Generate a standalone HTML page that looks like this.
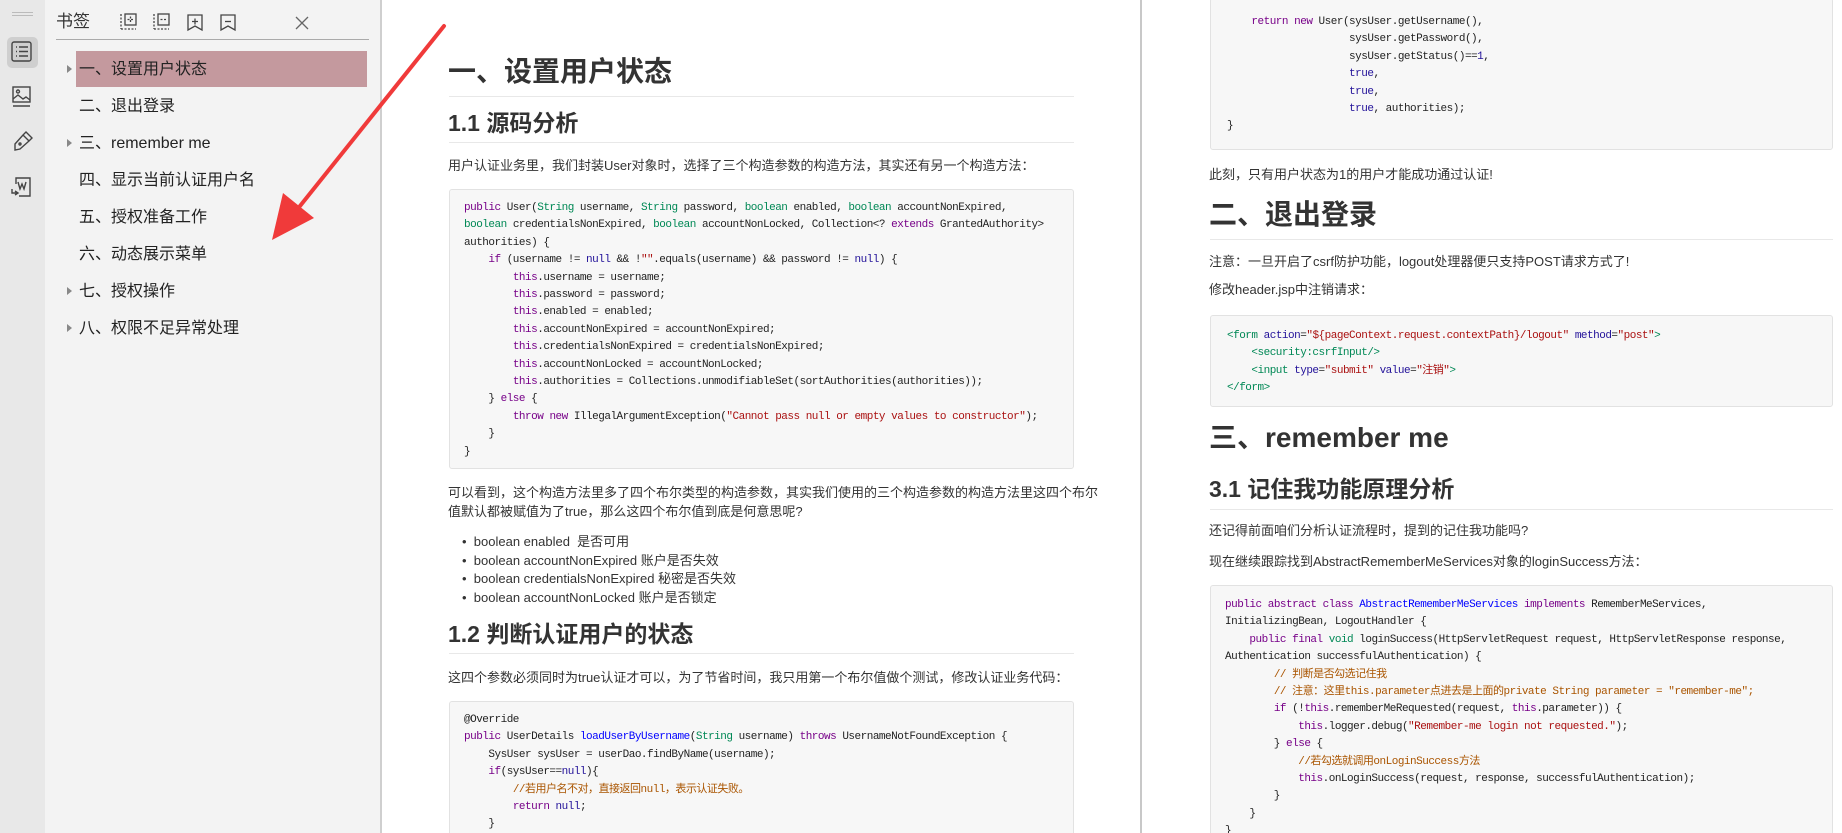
<!DOCTYPE html>
<html><head><meta charset="utf-8"><style>
*{margin:0;padding:0;box-sizing:border-box}
html,body{width:1842px;height:833px;overflow:hidden}
body{background:#e6e6e6;font-family:"Liberation Sans","Noto Sans CJK SC",sans-serif;position:relative;color:#333}
.abs{position:absolute}
#bar{left:0;top:0;width:45px;height:833px;background:#e8e8e8}
#panel{left:45px;top:0;width:335px;height:833px;background:#f3f3f3}
#vline{left:380px;top:0;width:2px;height:833px;background:#cfcfcf}
.page{top:0;height:833px;background:#fff}
.item{position:absolute;left:79px;font-size:16px;line-height:20px;color:#222;white-space:nowrap}
.tri{position:absolute;left:67px;width:0;height:0;border-left:5px solid #888;border-top:4px solid transparent;border-bottom:4px solid transparent}
.t{position:absolute;white-space:nowrap;font-size:13px;line-height:20px;color:#333}
.h1{position:absolute;font-size:28px;font-weight:bold;line-height:34px;color:#333;white-space:nowrap}
.h2{position:absolute;font-size:23px;font-weight:bold;line-height:28px;color:#333;white-space:nowrap}
.hr{position:absolute;height:1px;background:#e8e8e8}
.code{position:absolute;background:#f7f7f7;border:1px solid #e2e2e2;border-radius:3px;font-family:"Liberation Mono","Noto Sans CJK SC",monospace;font-size:11px;letter-spacing:-0.5px;line-height:17.4px;color:#222;white-space:pre;overflow:hidden}
.k{color:#770088}.ty{color:#008855}.s{color:#aa1111}.c{color:#aa5500}.b{color:#221199}.d{color:#0000ff}
#wrap{position:absolute;left:0;top:0;width:1842px;height:833px;overflow:hidden}
</style></head><body><div id="wrap">
<div id="bar" class="abs">
 <div class="abs" style="left:12px;top:12px;width:21px;height:1px;background:#bbb"></div>
 <div class="abs" style="left:12px;top:15px;width:21px;height:1px;background:#bbb"></div>
 <div class="abs" style="left:7px;top:37px;width:31px;height:31px;border-radius:5px;background:#cfcfcf"></div>
 <svg class="abs" style="left:11px;top:41px" width="23" height="22" viewBox="0 0 23 22" fill="none" stroke="#444" stroke-width="1.4"><rect x="1" y="1" width="19" height="19" rx="2"/><path d="M5 6h1M8 6h9M5 10.5h1M8 10.5h9M5 15h1M8 15h9"/></svg>
 <svg class="abs" style="left:11px;top:86px" width="22" height="22" viewBox="0 0 22 22" fill="none" stroke="#444" stroke-width="1.4"><rect x="2" y="1" width="17" height="15"/><circle cx="7" cy="5.5" r="1.5"/><path d="M2 13l5-4 5 4 3-2 4 3M2 20h17"/></svg>
 <svg class="abs" style="left:11px;top:131px" width="22" height="22" viewBox="0 0 22 22" fill="none" stroke="#444" stroke-width="1.4"><path d="M4 13l8-9 6 6-9 8-5 1z M12 4l3-3 6 6-3 3"/><circle cx="9" cy="13" r="1"/></svg>
 <svg class="abs" style="left:10px;top:176px" width="24" height="22" viewBox="0 0 24 22" fill="none" stroke="#444" stroke-width="1.4"><path d="M6 8V2h14v18H9M8 6l2 7 2-5 2 5 2-7M2 13v4h6M5 15l3 2-3 2"/></svg>
</div>
<div id="panel" class="abs">
 <div class="abs" style="left:11px;top:12px;font-size:17px;line-height:20px;color:#333">书签</div>
 <svg class="abs" style="left:75px;top:13px" width="150" height="20" viewBox="0 0 150 20" fill="none" stroke="#444" stroke-width="1.3">
  <rect x="5" y="1" width="11" height="11"/><path d="M10.5 3.5v6M7.5 6.5h6M1 1v15M1 16h15" stroke-dasharray="2 1.5"/>
  <rect x="38" y="1" width="11" height="11"/><path d="M40.5 6.5h6M34 1v15M34 16h15" stroke-dasharray="2 1.5"/>
  <path d="M68 2h14v15l-7-4-7 4z"/><path d="M75 5.5v6M72 8.5h6"/>
  <path d="M101 2h14v15l-7-4-7 4z"/><path d="M105 8.5h6"/>
 </svg>
 <svg class="abs" style="left:250px;top:16px" width="14" height="14" viewBox="0 0 14 14" stroke="#666" stroke-width="1.3"><path d="M1 1l12 12M13 1L1 13"/></svg>
 <div class="abs" style="left:11px;top:39px;width:313px;height:1px;background:#aaa"></div>
 <div class="abs" style="left:31px;top:51px;width:291px;height:36px;background:#c4999e"></div>
 <div class="tri" style="left:22px;top:65px"></div><div class="item" style="left:34px;top:60px">一、设置用户状态</div>
 <div class="item" style="left:34px;top:97px">二、退出登录</div>
 <div class="tri" style="left:22px;top:139px"></div><div class="item" style="left:34px;top:134px">三、remember me</div>
 <div class="item" style="left:34px;top:171px">四、显示当前认证用户名</div>
 <div class="item" style="left:34px;top:208px">五、授权准备工作</div>
 <div class="item" style="left:34px;top:245px">六、动态展示菜单</div>
 <div class="tri" style="left:22px;top:287px"></div><div class="item" style="left:34px;top:282px">七、授权操作</div>
 <div class="tri" style="left:22px;top:324px"></div><div class="item" style="left:34px;top:319px">八、权限不足异常处理</div>
</div>
<div id="vline" class="abs"></div>
<div class="abs page" style="left:382px;width:758px"></div>
<div class="abs" style="left:1140px;top:0;width:2px;height:833px;background:#c8c8c8"></div>
<div class="abs page" style="left:1142px;width:700px"></div>

<div class="h1" style="left:448px;top:55px">一、设置用户状态</div>
<div class="hr" style="left:449px;top:96px;width:625px"></div>
<div class="h2" style="left:448px;top:109px">1.1 源码分析</div>
<div class="hr" style="left:449px;top:142px;width:625px"></div>
<div class="t" style="left:448px;top:156px">用户认证业务里，我们封装User对象时，选择了三个构造参数的构造方法，其实还有另一个构造方法：</div>
<div class="code" style="left:449px;top:189px;width:625px;height:280px;padding:10px 0 0 14px"><span class="k">public</span> User(<span class="ty">String</span> username, <span class="ty">String</span> password, <span class="ty">boolean</span> enabled, <span class="ty">boolean</span> accountNonExpired,
<span class="ty">boolean</span> credentialsNonExpired, <span class="ty">boolean</span> accountNonLocked, Collection&lt;? <span class="k">extends</span> GrantedAuthority&gt;
authorities) {
    <span class="k">if</span> (username != <span class="b">null</span> &amp;&amp; !<span class="s">""</span>.equals(username) &amp;&amp; password != <span class="b">null</span>) {
        <span class="k">this</span>.username = username;
        <span class="k">this</span>.password = password;
        <span class="k">this</span>.enabled = enabled;
        <span class="k">this</span>.accountNonExpired = accountNonExpired;
        <span class="k">this</span>.credentialsNonExpired = credentialsNonExpired;
        <span class="k">this</span>.accountNonLocked = accountNonLocked;
        <span class="k">this</span>.authorities = Collections.unmodifiableSet(sortAuthorities(authorities));
    } <span class="k">else</span> {
        <span class="k">throw</span> <span class="k">new</span> IllegalArgumentException(<span class="s">"Cannot pass null or empty values to constructor"</span>);
    }
}</div>
<div class="t" style="left:448px;top:483px">可以看到，这个构造方法里多了四个布尔类型的构造参数，其实我们使用的三个构造参数的构造方法里这四个布尔</div>
<div class="t" style="left:448px;top:502px">值默认都被赋值为了true，那么这四个布尔值到底是何意思呢?</div>
<div class="t" style="left:462px;top:532px">•&nbsp;&nbsp;boolean enabled&nbsp; 是否可用</div>
<div class="t" style="left:462px;top:551px">•&nbsp;&nbsp;boolean accountNonExpired 账户是否失效</div>
<div class="t" style="left:462px;top:569px">•&nbsp;&nbsp;boolean credentialsNonExpired 秘密是否失效</div>
<div class="t" style="left:462px;top:588px">•&nbsp;&nbsp;boolean accountNonLocked 账户是否锁定</div>
<div class="h2" style="left:448px;top:620px">1.2 判断认证用户的状态</div>
<div class="hr" style="left:449px;top:653px;width:625px"></div>
<div class="t" style="left:448px;top:668px">这四个参数必须同时为true认证才可以，为了节省时间，我只用第一个布尔值做个测试，修改认证业务代码：</div>
<div class="code" style="left:449px;top:701px;width:625px;height:140px;padding:10px 0 0 14px">@Override
<span class="k">public</span> UserDetails <span class="d">loadUserByUsername</span>(<span class="ty">String</span> username) <span class="k">throws</span> UsernameNotFoundException {
    SysUser sysUser = userDao.findByName(username);
    <span class="k">if</span>(sysUser==<span class="b">null</span>){
        <span class="c">//若用户名不对，直接返回null，表示认证失败。</span>
        <span class="k">return</span> <span class="b">null</span>;
    }</div>

<div class="code" style="left:1210px;top:-2px;width:623px;height:152px;padding:15px 0 0 16px">    <span class="k">return</span> <span class="k">new</span> User(sysUser.getUsername(),
                    sysUser.getPassword(),
                    sysUser.getStatus()==<span class="b">1</span>,
                    <span class="b">true</span>,
                    <span class="b">true</span>,
                    <span class="b">true</span>, authorities);
}</div>
<div class="t" style="left:1209px;top:165px">此刻，只有用户状态为1的用户才能成功通过认证!</div>
<div class="h1" style="left:1209px;top:198px">二、退出登录</div>
<div class="hr" style="left:1210px;top:239px;width:623px"></div>
<div class="t" style="left:1209px;top:252px">注意：一旦开启了csrf防护功能，logout处理器便只支持POST请求方式了!</div>
<div class="t" style="left:1209px;top:280px">修改header.jsp中注销请求：</div>
<div class="code" style="left:1210px;top:315px;width:623px;height:92px;padding:12px 0 0 16px"><span class="ty">&lt;form</span> <span class="b">action</span>=<span class="s">"${pageContext.request.contextPath}/logout"</span> <span class="b">method</span>=<span class="s">"post"</span><span class="ty">&gt;</span>
    <span class="ty">&lt;security:csrfInput/&gt;</span>
    <span class="ty">&lt;input</span> <span class="b">type</span>=<span class="s">"submit"</span> <span class="b">value</span>=<span class="s">"注销"</span><span class="ty">&gt;</span>
<span class="ty">&lt;/form&gt;</span></div>
<div class="h1" style="left:1209px;top:421px">三、remember me</div>
<div class="h2" style="left:1209px;top:475px">3.1 记住我功能原理分析</div>
<div class="hr" style="left:1210px;top:509px;width:623px"></div>
<div class="t" style="left:1209px;top:521px">还记得前面咱们分析认证流程时，提到的记住我功能吗?</div>
<div class="t" style="left:1209px;top:552px">现在继续跟踪找到AbstractRememberMeServices对象的loginSuccess方法：</div>
<div class="code" style="left:1210px;top:585px;width:623px;height:260px;padding:11px 0 0 14px"><span class="k">public</span> <span class="k">abstract</span> <span class="k">class</span> <span class="d">AbstractRememberMeServices</span> <span class="k">implements</span> RememberMeServices,
InitializingBean, LogoutHandler {
    <span class="k">public</span> <span class="k">final</span> <span class="ty">void</span> loginSuccess(HttpServletRequest request, HttpServletResponse response,
Authentication successfulAuthentication) {
        <span class="c">// 判断是否勾选记住我</span>
        <span class="c">// 注意：这里this.parameter点进去是上面的private String parameter = "remember-me";</span>
        <span class="k">if</span> (!<span class="k">this</span>.rememberMeRequested(request, <span class="k">this</span>.parameter)) {
            <span class="k">this</span>.logger.debug(<span class="s">"Remember-me login not requested."</span>);
        } <span class="k">else</span> {
            <span class="c">//若勾选就调用onLoginSuccess方法</span>
            <span class="k">this</span>.onLoginSuccess(request, response, successfulAuthentication);
        }
    }
}</div>

<svg class="abs" style="left:0;top:0" width="1842" height="833" viewBox="0 0 1842 833">
 <path d="M444 26 L300 206" stroke="#f03a3a" stroke-width="4" stroke-linecap="round"/>
 <polygon points="272,240 283,193 314,218" fill="#f03a3a"/>
</svg>
</div></body></html>
